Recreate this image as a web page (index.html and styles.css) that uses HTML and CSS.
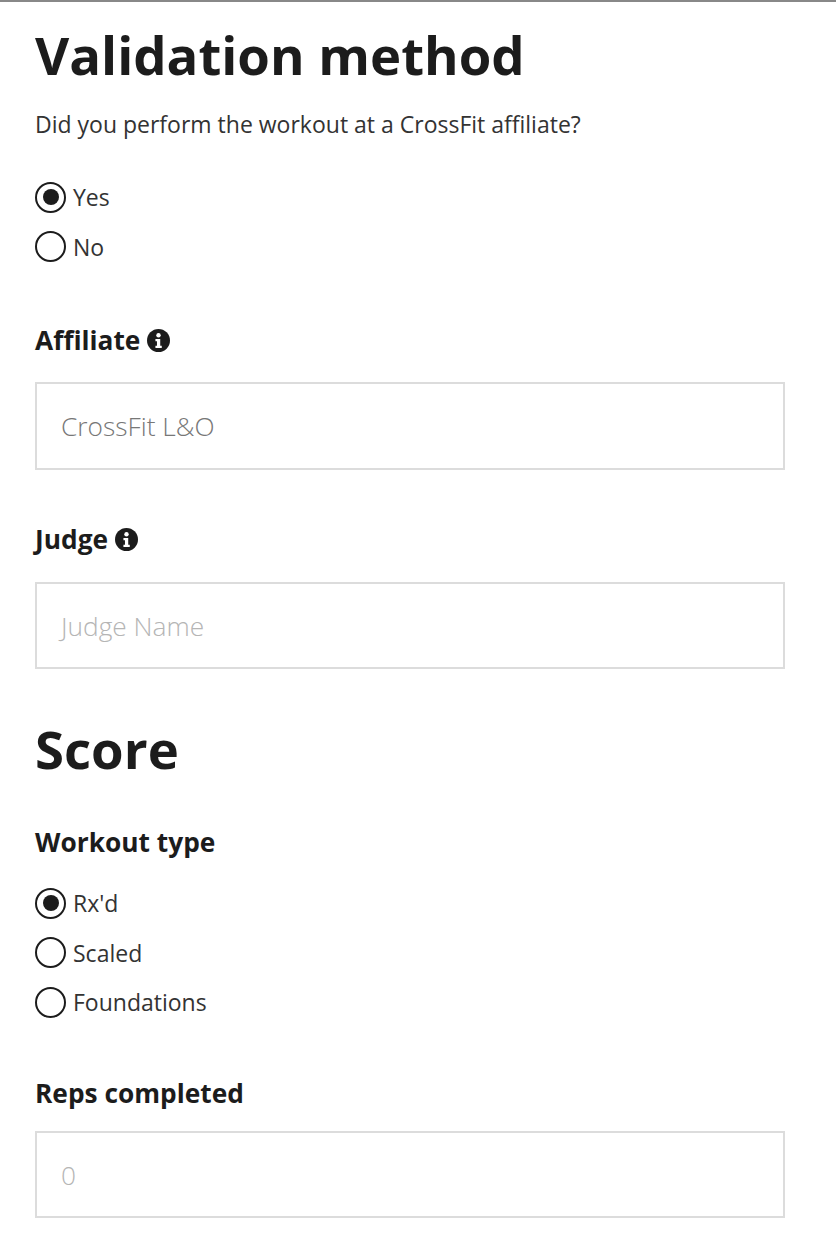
FILE: index.html
```html
<!DOCTYPE html>
<html lang="en">
<head>
    <meta charset="UTF-8">
    <meta name="viewport" content="width=device-width, initial-scale=1.0">
    <title>Validation method</title>
    <link rel="stylesheet" href="styles.css">
</head>
<body>
    <form class="page">
        <h1 class="first">Validation method</h1>
        <p class="question">Did you perform the workout at a CrossFit affiliate?</p>

        <div class="radios">
            <label class="radio"><span class="dot on"></span>Yes</label>
            <label class="radio"><span class="dot"></span>No</label>
        </div>

        <h3 class="label affiliate">Affiliate
            <svg class="info" viewBox="0 0 24 24"><circle cx="12" cy="12" r="12" fill="#1c1c1c"/><circle cx="12" cy="6.6" r="2.3" fill="#fff"/><path d="M8.8 10.4h5v7h1.6v2.4H8.8v-2.4h1.6v-4.6H8.8z" fill="#fff"/></svg>
        </h3>
        <div class="field value tall">CrossFit L&amp;O</div>

        <h3 class="label judge">Judge
            <svg class="info" viewBox="0 0 24 24"><circle cx="12" cy="12" r="12" fill="#1c1c1c"/><circle cx="12" cy="6.6" r="2.3" fill="#fff"/><path d="M8.8 10.4h5v7h1.6v2.4H8.8v-2.4h1.6v-4.6H8.8z" fill="#fff"/></svg>
        </h3>
        <div class="field">Judge Name</div>

        <h1 class="score">Score</h1>

        <h3 class="label type">Workout type</h3>
        <div class="radios type-radios">
            <label class="radio"><span class="dot on"></span>Rx'd</label>
            <label class="radio"><span class="dot"></span>Scaled</label>
            <label class="radio"><span class="dot"></span>Foundations</label>
        </div>

        <h3 class="label reps">Reps completed</h3>
        <div class="field reps-field">0</div>
    </form>
</body>
</html>
```

FILE: styles.css
```css
body {
    margin: 0;
    background: #fff;
    color: #1c1c1c;
    font-family: "Open Sans", sans-serif;
    border-top: 2px solid #888;
}

.page {
    padding: 0 51px 0 35px;
}

h1 {
    margin: 0;
    font-size: 52.7px;
    line-height: 68px;
    font-weight: 700;
}

h1.first {
    margin-top: 19px;
}

.question {
    margin: 21px 0 0;
    font-size: 23px;
    line-height: 28px;
    color: #333;
}

.radios {
    display: flex;
    flex-direction: column;
    gap: 21.5px;
    margin-top: 45px;
}

.radio {
    display: flex;
    align-items: center;
    gap: 7px;
    height: 28px;
    font-size: 23px;
    color: #333;
}

.dot {
    box-sizing: border-box;
    width: 31px;
    height: 31px;
    border: 2.5px solid #1c1c1c;
    border-radius: 50%;
    display: flex;
    align-items: center;
    justify-content: center;
}

.dot.on::after {
    content: "";
    width: 16px;
    height: 16px;
    border-radius: 50%;
    background: #1c1c1c;
}

.label {
    margin: 0;
    font-size: 26.3px;
    line-height: 32px;
    font-weight: 700;
    display: flex;
    align-items: center;
    gap: 7px;
}

.info {
    width: 23px;
    height: 23px;
}

.affiliate {
    margin-top: 63.5px;
}

.judge {
    margin-top: 53px;
}

.score {
    margin-top: 46px;
}

.type {
    margin-top: 43px;
}

.type-radios {
    margin-top: 31px;
}

.reps {
    margin-top: 61px;
}

.field {
    box-sizing: border-box;
    height: 87px;
    margin-top: 27px;
    padding-left: 24px;
    border: 2px solid #dcdcdc;
    display: flex;
    align-items: center;
    font-size: 26.3px;
    font-weight: 300;
    color: #b5b5b5;
}

.field.value {
    color: #777;
}

.field.tall {
    height: 88px;
    margin-top: 26px;
}

.field.reps-field {
    margin-top: 22px;
}
```
